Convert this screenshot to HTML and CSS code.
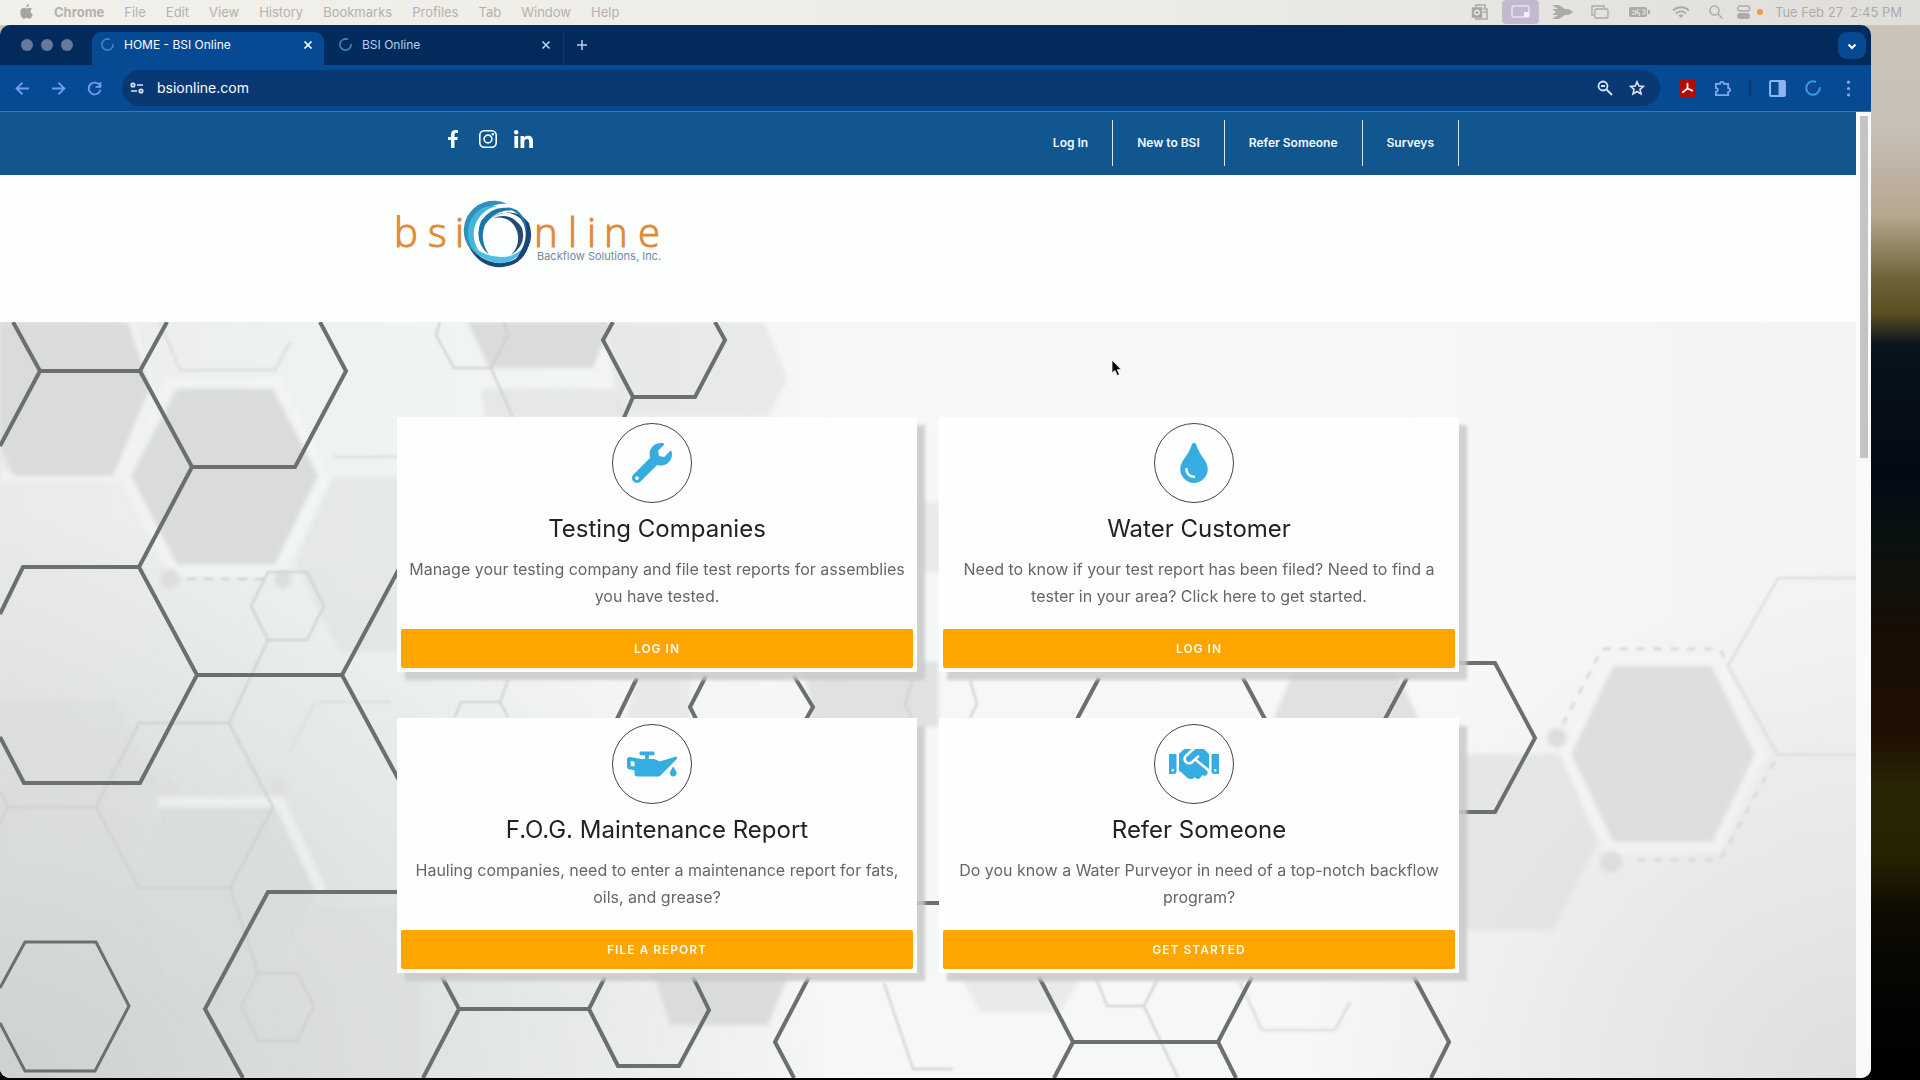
FILE: index.html
```html
<!DOCTYPE html>
<html lang="en">
<head>
<meta charset="utf-8">
<title>HOME - BSI Online</title>
<link rel="stylesheet" href="styles.css">
</head>
<body>
<svg class="defs" aria-hidden="true">
  <symbol id="ring" viewBox="0 0 16 16"><path d="M10 2.400A6 6 0 1 0 14 8" fill="none" stroke="currentColor" stroke-width="1.800" stroke-linecap="round"/></symbol>
  <symbol id="close" viewBox="0 0 10 10"><path d="M1.500 1.500l7 7M8.500 1.500l-7 7" stroke="currentColor" stroke-width="1.700"/></symbol>
</svg>

<header class="menubar">
  <nav class="menus" aria-label="Menu bar">
    <svg class="apple" viewBox="0 0 14 16"><path d="M9.800 0c.1 1.800-1.400 3.300-3 3.300C6.600 1.700 8.200.2 9.800 0zM12.900 5.400c-2.200 1.500-1.800 4.700.8 5.700-.8 2.200-2.100 4.700-3.700 4.700-1.100 0-1.500-.7-2.800-.7s-1.800.7-2.800.7C2.300 15.800.3 12 .3 8.700c0-3 1.900-4.700 3.800-4.700 1.200 0 2.200.8 3 .8s1.900-.9 3.400-.9c1 0 1.900.6 2.400 1.500z" fill="currentColor"/></svg>
    <b>Chrome</b><span>File</span><span>Edit</span><span>View</span><span>History</span><span>Bookmarks</span><span>Profiles</span><span>Tab</span><span>Window</span><span>Help</span>
  </nav>
  <div class="status">
    <svg class="outlook" viewBox="0 0 18 18"><g fill="none" stroke="currentColor" stroke-width="1.600"><path d="M5 5V2h9v3M5 14v2h11V6h-4M12 9h4"/><rect x="1.500" y="5" width="9" height="9" fill="#a3a29e"/></g><circle cx="6" cy="9.500" r="2.200" fill="none" stroke="#ecebe7" stroke-width="1.400"/></svg>
    <span class="recording"><svg viewBox="0 0 20 14"><rect x="1" y="1" width="17" height="11" rx="2" fill="none" stroke="#e6e1f0" stroke-width="1.600"/><path d="M13 12V7h5v5" fill="#f3f0f8"/></svg></span>
    <svg class="arrows" viewBox="0 0 22 14"><path d="M1 0h7l6 4h4l4 3-4 3h-4l-6 4H1l6-4H1l4-3-4-3h6z" fill="currentColor"/></svg>
    <svg class="stack" viewBox="0 0 18 14"><g fill="none" stroke="currentColor" stroke-width="1.400"><path d="M3 10H1V1h12v2"/><rect x="4" y="4" width="13" height="9" rx="1"/></g></svg>
    <svg class="battery" viewBox="0 0 21 10"><rect width="18" height="10" rx="2" fill="currentColor"/><path d="M19 3h2v4h-2z" fill="currentColor"/><path d="M3 4h4v3H3M9 2l-1 4h3l-1 3M13 3h3v4h-3" stroke="#ecebe7" fill="none"/></svg>
    <svg class="wifi" viewBox="0 0 18 14"><g fill="none" stroke="currentColor" stroke-width="1.800"><path d="M1 5.500a11.500 11.500 0 0 1 16 0M4 8.500a7 7 0 0 1 10 0"/></g><path d="M9 13L6.500 10.500a3.500 3.500 0 0 1 5 0z" fill="currentColor"/></svg>
    <svg class="search" viewBox="0 0 14 14"><g fill="none" stroke="currentColor" stroke-width="1.500"><circle cx="5.500" cy="5.500" r="4.500"/><path d="M9 9l4.500 4.500"/></g></svg>
    <svg class="control" viewBox="0 0 26 14"><rect x=".7" y="1" width="12" height="5" rx="2.500" fill="none" stroke="currentColor" stroke-width="1.400"/><rect y="8" width="13" height="6" rx="3" fill="currentColor"/><circle cx="23" cy="7" r="3" fill="#f59a3c"/></svg>
    <time>Tue Feb 27&nbsp; 2:45 PM</time>
  </div>
</header>

<main class="window">
  <div class="tabstrip">
    <div class="lights"><i></i><i></i><i></i></div>
    <div class="tab active"><svg class="ring"><use href="#ring"/></svg><span>HOME - BSI Online</span><button aria-label="Close tab"><svg><use href="#close"/></svg></button></div>
    <div class="tab"><svg class="ring"><use href="#ring"/></svg><span>BSI Online</span><button aria-label="Close tab"><svg><use href="#close"/></svg></button></div>
    <button class="newtab" aria-label="New tab"><svg viewBox="0 0 12 12"><path d="M6 1v10M1 6h10" stroke="currentColor" stroke-width="1.500"/></svg></button>
    <button class="tabsearch" aria-label="Search tabs"><svg viewBox="0 0 12 12"><path d="M2.500 4.500L6 8l3.500-3.500" fill="none" stroke="#fff" stroke-width="2"/></svg></button>
  </div>

  <div class="toolbar">
    <button aria-label="Back"><svg viewBox="0 0 14 14"><path d="M13 7H2M7 1.500L1.500 7 7 12.500"/></svg></button>
    <button aria-label="Forward"><svg viewBox="0 0 14 14"><path d="M1 7h11M7 1.500L12.500 7 7 12.500"/></svg></button>
    <button aria-label="Reload"><svg viewBox="0 0 14 14"><path d="M12 4.500A5.500 5.500 0 1 0 12.500 8M12.500 1v4.500H8"/></svg></button>
    <div class="omnibox">
      <svg class="tune" viewBox="0 0 14 12"><g fill="none" stroke="currentColor" stroke-width="1.700"><circle cx="3" cy="3" r="1.700"/><path d="M7 3h6M1 9h6"/><circle cx="11" cy="9" r="1.700"/></g></svg>
      <input type="text" aria-label="Address" value="bsionline.com">
      <svg class="mag" viewBox="0 0 16 16"><g fill="none" stroke="currentColor" stroke-width="1.800"><circle cx="6" cy="6" r="4.500"/><path d="M9.500 9.500L15 15M4 6h4"/></g></svg>
      <svg class="mag" viewBox="0 0 16 16"><path d="M8 1.800l1.900 4.200 4.500.4-3.400 3 1 4.500L8 11.500l-4 2.400 1-4.500-3.400-3 4.500-.4z" fill="none" stroke="currentColor" stroke-width="1.600"/></svg>
    </div>
    <div class="extensions">
      <svg viewBox="0 0 16 16"><rect width="16" height="16" rx="2" fill="#b30b00"/><path d="M8 3.500V8l-4.500 3.500M8 8l4.500 2" fill="none" stroke="#fff" stroke-width="1.700" stroke-linecap="round"/></svg>
      <svg viewBox="0 0 18 18"><path d="M2 4h4.500a2 2 0 0 1 4 0H15v4.500a2 2 0 0 1 0 4V16H2v-3.500a2 2 0 0 0 0-4z" fill="none" stroke="#7fa8ea" stroke-width="1.900"/></svg>
      <span class="rule"></span>
      <svg viewBox="0 0 16 16"><rect x="1" y="1" width="14" height="14" rx="1" fill="none" stroke="#8fb4f0" stroke-width="1.900"/><path d="M9 1h6v14H9z" fill="#8fb4f0"/></svg>
      <svg class="profile" viewBox="0 0 16 16"><use href="#ring"/></svg>
      <svg viewBox="0 0 16 16"><g fill="#7fa8ea"><circle cx="8" cy="2" r="1.500"/><circle cx="8" cy="8" r="1.500"/><circle cx="8" cy="14" r="1.500"/></g></svg>
    </div>
  </div>

  <div class="viewport">
    <div class="page">
      <div class="topbar">
        <div class="container">
          <div class="social">
            <a href="#" aria-label="Facebook"><svg viewBox="0 0 10 18"><path d="M3 18V10H0V7h3V4.500C3 1.500 4.800 0 7.400 0 8.600 0 9.600.1 10 .2v2.900H8.200C6.800 3.100 6.500 3.800 6.500 4.800V7h3.300l-.5 3H6.500v8z" fill="#fff"/></svg></a>
            <a href="#" aria-label="Instagram"><svg viewBox="0 0 18 18"><g fill="none" stroke="#fff" stroke-width="1.600"><rect x=".8" y=".8" width="16.400" height="16.400" rx="4.500"/><circle cx="9" cy="9" r="3.900"/></g><circle cx="13.800" cy="4.200" r="1.200" fill="#fff"/></svg></a>
            <a href="#" aria-label="LinkedIn"><svg viewBox="0 0 19 18"><circle cx="2.200" cy="2.200" r="2.200" fill="#fff"/><path d="M.4 6h3.700v12H.4zM6.500 6H10v1.700C10.600 6.600 11.900 5.700 13.700 5.700 17.500 5.700 19 7.700 19 11.300V18h-3.800v-6c0-1.600-.3-3-2.200-3s-2.700 1.400-2.700 3v6H6.500z" fill="#fff"/></svg></a>
          </div>
          <nav class="links" aria-label="Site">
            <a href="#">Log In</a><a href="#">New to BSI</a><a href="#">Refer Someone</a><a href="#">Surveys</a>
          </nav>
        </div>
      </div>

      <div class="brand">
        <div class="container">
          <a href="#" aria-label="bsi Online, Backflow Solutions, Inc.">
            <svg class="logo" viewBox="0 0 270 66">
              <text class="word" y="44" x="-3 31 58">bsi</text>
              <text class="word" y="44" x="137 171 190 207 241">nline</text>
              <text class="tag" x="140" y="57">Backflow Solutions, Inc.</text>
              <g>
                <path fill="#2f8fbd" d="M110 1A32 32 0 0 0 83 54A28 28 0 0 1 110 1z"/>
                <path fill="#45b4dc" d="M100 3A29 29 0 0 0 92 57A24 26 0 0 1 100 3z"/>
                <path fill="#1a76ab" d="M122 8Q98 -2 84 18Q76 38 92 52Q82 36 88 22Q100 4 122 8z"/>
                <path fill="#1d4774" d="M72 44Q84 66 106 64Q126 62 132 42Q122 59 104 60Q86 60 72 44z"/>
                <path fill="#4cc0e4" d="M76 43Q88 62 106 60Q120 58 127 44Q116 55 104 54Q88 54 76 43z"/>
                <path fill="#16457b" d="M94 15Q110 4 124 16Q136 34 118 57Q140 44 132 20Q118 2 94 15z"/>
                <path fill="#1e7fb4" d="M108 5Q128 10 129 30Q131 18 122 9Q114 3 108 5z"/>
                <path fill="#234c73" d="M96 15Q114 12 120 28Q124 42 114 52Q130 42 125 25Q114 8 96 15z"/>
              </g>
            </svg>
          </a>
        </div>
      </div>

      <section class="hero">
        <svg class="hexes" viewBox="0 0 1856 756" preserveAspectRatio="xMidYMin slice" aria-hidden="true">
          <defs>
            <filter id="soft" x="-5%" y="-5%" width="110%" height="110%"><feGaussianBlur stdDeviation="2"/></filter>
            <filter id="faint" x="-5%" y="-5%" width="110%" height="110%"><feGaussianBlur stdDeviation="1"/></filter>
          </defs>
          <g filter="url(#soft)">
            <g fill="none" stroke="#f4f6f5" stroke-width="11" opacity=".6">
              <path d="M128 -4L150 70 113 154H0M170 60H277L325 154 279 249H173L124 154zM158 480H280L322 570M1566 434L1610 338H1716L1762 432 1716 526H1610z"/>
            </g>
            <g class="tile">
              <path d="M0 0H128L150 66 113 154H13L0 124z"/>
              <path d="M177 67H273L318 154 275 242H177L131 154z"/>
              <path d="M165 486H275L315 570 272 660H170L130 575z" opacity=".7"/>
              <path d="M468 0H611L593 46H489z"/><path d="M482 67H614L626 96H485z" opacity=".5"/>
              <path d="M650 640H794L768 703H670z"/>
              <path d="M800 340H938V405H806L813 385z" opacity=".8"/>
              <path d="M1300 335H1390L1422 405H1270z" opacity=".8"/>
            </g>
            <path class="tile" opacity=".45" d="M333 155H420V330H340L295 240zM0 378H115L160 470 115 556H0zM310 585H420V756H300L270 680zM604 0H764L788 57 768 95H620zM640 345H690V400H625zM917 180H940V250H917zM952 640H1090L1060 690H980z"/>
            <path fill="#dedfdf" opacity=".7" d="M1450 432H1560L1598 520 1553 608H1450z"/>
            <path fill="#dedede" d="M1571 432L1613 344H1712L1755 432 1712 520H1613z"/>
            <g fill="#dcdedd"><circle cx="170" cy="257" r="10"/><circle cx="283" cy="257" r="9"/><circle cx="168" cy="466" r="9"/><circle cx="278" cy="466" r="9"/><circle cx="1557" cy="416" r="10"/><circle cx="1611" cy="540" r="11"/></g>
          </g>
          <g fill="none" stroke="#cdd0cf" stroke-width="2" filter="url(#faint)">
            <path d="M251 284L268 250H307L324 284 307 318H268zM268 318L229 401H139L96 485 139 566H230L273 485 229 401M96 485H8L0 470M8 485L0 502M230 566L258 650M241 684L258 651H297L314 684 297 719H258z"/>
            <path d="M440 0L436 13 454 46H491L508 13 504 0M491 46L513 96M455 395L461 380H500L508 395M500 380L508 358M884 661L913 747H953M1096 656L1107 684H1144L1158 656M1144 684L1178 756M912 358L905 382 912 396M970 358L977 382 970 396"/>
            <path stroke="#dfe1e0" stroke-width="3" d="M1856 256H1778L1728 344 1778 433H1856M1240 660L1262 708H1335L1350 680M160 0L180 48H275L290 20M333 135H410M317 380H390M290 430L315 380"/>
            <path stroke-dasharray="9 8" d="M187 257H268"/>
            <path stroke="#dadada" stroke-width="3" stroke-dasharray="8 9" d="M1563 402L1602 327H1720L1728 344M1774 440L1720 538H1628"/>
          </g>
          <g fill="none" stroke="#6c6f6f" stroke-width="4">
            <path d="M13 0L40 49H140L167 0M40 49L0 124M140 49L192 145H295L346 49 320 0M192 145L139 245M0 292L23 245H139L197 353 140 461H24L0 415M197 353H342L400 245M342 353L400 460M420 570H268L205 687 243 756"/>
            <path stroke-width="3" d="M0 666L25 620H96L129 684 95 749H25L0 701"/>
            <path d="M613 0L603 18 633 75H695L725 18 715 0M633 75L623 98"/>
            <path d="M637 356L616 399M706 354L690 385 697 399M794 354L813 385 805 399M1099 356L1076 399M1243 356L1266 399M1407 356L1384 399M1450 341H1495L1535 416 1495 490H1450M910 581H945"/>
            <path d="M442 655L459 687H589L605 655M459 687L423 756M589 687L618 744H679L709 688 693 655M809 655L775 720 794 756M1039 655L1073 720H1218L1252 655M1073 720L1054 756M1218 720L1236 756M1414 655L1449 720 1431 756"/>
          </g>
        </svg>
        <div class="cards">
          <article class="card">
            <div class="icon"><span><svg width="40" height="40" viewBox="0 0 512 512"><path d="M507.730 109.100c-2.240-9.030-13.540-12.090-20.120-5.510l-74.360 74.360-67.880-11.310-11.310-67.880 74.360-74.360c6.620-6.620 3.430-17.900-5.660-20.160-47.380-11.740-99.550.91-136.580 37.930-39.640 39.640-50.550 97.100-34.050 147.200L18.740 402.760c-24.990 24.990-24.990 65.510 0 90.500 24.990 24.990 65.510 24.990 90.500 0l213.210-213.210c50.120 16.710 107.470 5.680 147.370-34.220 37.070-37.070 49.700-89.320 37.910-136.730zM64 472c-13.250 0-24-10.750-24-24 0-13.260 10.750-24 24-24s24 10.740 24 24c0 13.250-10.750 24-24 24z"/></svg></span></div>
            <h2>Testing Companies</h2>
            <p>Manage your testing company and file test reports for assemblies you have tested.</p>
            <a class="cta" href="#">LOG IN</a>
          </article>
          <article class="card">
            <div class="icon"><span><svg width="28" height="40" viewBox="0 0 352 512"><path d="M205.220 22.090c-7.940-28.780-49.440-30.120-58.440 0C100.010 179.850 0 222.720 0 333.910 0 432.350 78.720 512 176 512s176-79.650 176-178.090c0-111.750-99.790-153.340-146.780-311.820zM176 448c-61.750 0-112-50.250-112-112 0-8.840 7.160-16 16-16s16 7.160 16 16c0 44.110 35.890 80 80 80 8.840 0 16 7.160 16 16s-7.160 16-16 16z"/></svg></span></div>
            <h2>Water Customer</h2>
            <p>Need to know if your test report has been filed? Need to find a tester in your area? Click here to get started.</p>
            <a class="cta" href="#">LOG IN</a>
          </article>
          <article class="card">
            <div class="icon"><span><svg width="50" height="40" viewBox="0 0 640 512"><path d="M629.800 160.310L416 224l-50.490-25.240a64.070 64.070 0 0 0-28.620-6.760H280v-48h56c8.840 0 16-7.160 16-16v-16c0-8.840-7.160-16-16-16H176c-8.840 0-16 7.160-16 16v16c0 8.840 7.160 16 16 16h56v48h-56L37.720 166.860a31.900 31.900 0 0 0-5.790-.53C14.670 166.330 0 180.360 0 198.340v94.950c0 15.460 11.060 28.720 26.280 31.480L96 337.460V384c0 17.670 14.330 32 32 32h274.630c8.550 0 16.750-3.420 22.760-9.510l212.260-214.750c1.500-1.500 2.340-3.540 2.340-5.660V168c.01-5.310-5.080-9.150-10.190-7.690zM96 288.670l-48-8.730v-62.430l48 8.730v62.430zm453.330 84.660c0 23.560 19.100 42.670 42.670 42.670s42.670-19.100 42.670-42.670S592 288 592 288s-42.670 61.770-42.670 85.330z"/></svg></span></div>
            <h2>F.O.G. Maintenance Report</h2>
            <p>Hauling companies, need to enter a maintenance report for fats, oils, and grease?</p>
            <a class="cta" href="#">FILE A REPORT</a>
          </article>
          <article class="card">
            <div class="icon"><span><svg width="50" height="40" viewBox="0 0 640 512"><path d="M434.700 64h-85.900c-8 0-15.700 3-21.600 8.400l-98.300 90c-.1.1-.2.3-.3.4-16.600 15.600-16.300 40.500-2.100 56 12.700 13.900 39.400 17.600 56.100 2.700.1-.1.3-.1.4-.2l79.900-73.200c6.500-5.900 16.700-5.500 22.600 1 6 6.500 5.500 16.600-1 22.600l-26.100 23.900L504 313.800c2.900 2.400 5.500 5 7.900 7.700V128l-54.600-54.600c-5.900-6-14.100-9.400-22.600-9.400zM544 128.200v223.900c0 17.700 14.300 32 32 32h64V128.200h-96zm48 223.900c-8.800 0-16-7.200-16-16s7.200-16 16-16 16 7.200 16 16-7.200 16-16 16zM0 384h64c17.700 0 32-14.300 32-32V128.200H0V384zm48-63.900c8.800 0 16 7.200 16 16s-7.200 16-16 16-16-7.200-16-16c0-8.900 7.200-16 16-16zm435.900 18.600L334.600 217.500l-30 27.500c-29.700 27.100-75.200 24.500-101.700-4.400-26.900-29.400-24.800-74.900 4.400-101.700L289.100 64h-83.800c-8.500 0-16.600 3.400-22.600 9.400L128 128v223.900h18.300l90.500 81.900c27.400 22.300 67.700 18.100 90-9.300l.2-.2 17.900 15.500c15.900 13 39.400 10.500 52.300-5.400l31.400-38.600 5.400 4.400c13.700 11.100 33.900 9.100 45-4.700l9.500-11.700c11.200-13.800 9.100-33.900-4.600-45.100z"/></svg></span></div>
            <h2>Refer Someone</h2>
            <p>Do you know a Water Purveyor in need of a top-notch backflow program?</p>
            <a class="cta" href="#">GET STARTED</a>
          </article>
        </div>
      </section>
    </div>
    <div class="scrollbar"><div class="thumb"></div></div>
  </div>
</main>

<svg class="cursor" viewBox="0 0 12 18" aria-hidden="true"><path d="M1 1v13l3-2.500 2.200 5 2.300-1-2.200-4.800h4z" fill="#000" stroke="#fff" stroke-width=".8"/></svg>
</body>
</html>
```

FILE: styles.css
```css
* { box-sizing: border-box; }

body {
  margin: 0;
  min-height: 100vh;
  display: flex;
  flex-direction: column;
  font-family: Inter, "Liberation Sans", sans-serif;
  background: linear-gradient(180deg, #cbc4bc 0, #c8c0b6 12%, #b5a68f 20%, #6d6136 26%, #5a4d22 29%, #08131c 32%, #030a16 44%, #0a120f 50%, #170d06 58%, #1f1003 68%, #2a2604 73%, #262303 79%, #100c02 84%, #040402 92%, #000 100%);
}

a { color: inherit; text-decoration: none; }
button { border: 0; padding: 0; background: none; color: inherit; font: inherit; display: flex; align-items: center; justify-content: center; }
svg { display: block; flex: none; }
.defs { position: absolute; width: 0; height: 0; }

/* macOS menu bar */
.menubar {
  height: 25px;
  display: flex;
  align-items: center;
  justify-content: space-between;
  padding: 0 18px 2px 20px;
  background: linear-gradient(90deg, #f1f0eb, #ecebe6 60%, #e0deda);
  color: #b3b2ae;
  font-size: 13px;
}
.menus { display: flex; align-items: center; gap: 20px; }
.apple { width: 13px; height: 15px; margin-right: 1px; color: #a5a4a0; }
.status { display: flex; align-items: center; color: #acaba7; }
.outlook { width: 18px; height: 18px; margin-right: 13px; }
.recording { width: 37px; height: 24px; border-radius: 4px; background: #c3bad2; display: flex; align-items: center; justify-content: center; margin-right: 12px; }
.recording svg { width: 20px; height: 14px; }
.arrows { width: 22px; height: 14px; margin-right: 18px; }
.stack { width: 18px; height: 14px; margin-right: 20px; }
.battery { width: 21px; height: 10px; margin-right: 22px; }
.wifi { width: 18px; height: 14px; margin-right: 19px; }
.search { width: 14px; height: 14px; margin-right: 14px; }
.control { width: 26px; height: 14px; margin-right: 12px; }

/* Browser window */
.window {
  flex: 1;
  margin: 0 49px 2px 0;
  display: flex;
  flex-direction: column;
  border-radius: 10px;
  overflow: hidden;
}
.tabstrip {
  height: 40px;
  display: flex;
  align-items: flex-end;
  padding: 0 5px 0 21px;
  background: #022a5b;
  color: #b9d0f5;
  font-size: 12px;
}
.lights { display: flex; gap: 8px; align-self: center; margin-right: 19px; }
.lights i { width: 12px; height: 12px; border-radius: 50%; background: #66799b; }
.tab { width: 240px; height: 33px; display: flex; align-items: center; padding: 0 11px 8px; gap: 9px; }
.tab.active { width: 232px; background: #064a94; color: #fff; border-radius: 9px 9px 0 0; padding: 0 11px 8px 8px; }
.tab:not(.active) { padding-left: 14px; padding-right: 12px; border-right: 1px solid #0b3a75; }
.tab .ring { width: 15px; height: 15px; color: #3f86c0; }
.tab span { flex: 1; }
.tab button svg { width: 10px; height: 10px; }
.newtab { height: 33px; padding: 0 0 8px 12px; }
.newtab svg { width: 12px; height: 12px; }
.tabsearch { width: 28px; height: 27px; margin: 0 0 6px auto; border-radius: 9px; background: #064a94; }
.tabsearch svg { width: 12px; height: 12px; }

.toolbar {
  height: 47px;
  display: flex;
  align-items: center;
  padding: 0 14px;
  background: #064a94;
  border-bottom: 1px solid #3d74b4;
}
.toolbar > button { width: 16px; margin-right: 20px; }
.toolbar > button svg { width: 15px; height: 15px; fill: none; stroke: #6ea0f0; stroke-width: 1.7; }
.omnibox {
  flex: 1;
  height: 36px;
  display: flex;
  align-items: center;
  padding: 0 15px 0 8px;
  border-radius: 18px;
  background: #0a3873;
  color: #dbe6fa;
}
.tune { width: 14px; height: 12px; }
.omnibox input { flex: 1; min-width: 0; border: 0; padding: 0; margin-left: 13px; background: none; color: #fff; font: 14px/20px Inter, sans-serif; outline: 0; }
.mag { width: 16px; height: 16px; margin-left: 16px; }
.extensions { display: flex; align-items: center; gap: 18px; margin-left: 19px; }
.extensions svg { width: 17px; height: 17px; }
.rule { width: 2px; height: 16px; background: #0a3873; }
.extensions .profile { width: 18px; height: 18px; color: #3a9bd8; }

/* Site */
.viewport { flex: 1; display: flex; background: #fff; }
.page { flex: 1; display: flex; flex-direction: column; }
.scrollbar { width: 15px; padding: 4px 3px 0 4px; background: #fafafa; }
.thumb { height: 342px; background: #c4c4c4; }
.container { width: 1062px; max-width: 100%; margin: 0 auto; display: flex; justify-content: space-between; }

.topbar { height: 63px; background: #11568f; }
.topbar .container { padding: 8px 0 0 47px; }
.social { display: flex; align-items: center; gap: 17px; height: 38px; }
.social a { width: 18px; display: flex; justify-content: center; }
.social svg { height: 18px; }
.links { display: flex; color: #f4faff; font-size: 12px; font-weight: 600; line-height: 46px; }
.links a { padding: 0 24px; border-right: 1px solid #d4e8f6; }

.brand { height: 147px; padding-top: 28px; background: #fdfefe; }
.logo { width: 270px; height: 66px; overflow: visible; }
.word { font: 300 40px "Open Sans", sans-serif; fill: #e08b33; stroke: #e08b33; }
.tag { font: 11px Inter, sans-serif; fill: #6f8aa9; }

.hero {
  flex: 1;
  position: relative;
  padding: 95px 0 104px;
  overflow: hidden;
  background:
    radial-gradient(ellipse 45% 75% at 0 100%, #cdd1d0, rgba(214, 218, 217, 0)),
    radial-gradient(ellipse 30% 65% at 100% 100%, #dedede, rgba(230, 230, 230, 0)),
    linear-gradient(90deg, #e8ebea, #eff3f2 20%, #f6f7f7 45%, #f7f7f7 75%, #f3f3f3);
}
.hexes { position: absolute; inset: 0; width: 100%; height: 100%; }
.tile { fill: #d9dcdb; }

.cards {
  position: relative;
  width: 1062px;
  max-width: 100%;
  margin: 0 auto;
  display: grid;
  grid-template-columns: 1fr 1fr;
  gap: 46px 22px;
}
.card {
  padding: 6px 4px 4px;
  background: #fefefe;
  box-shadow: 8px 8px 3px rgba(200, 202, 201, .85);
  text-align: center;
}
.icon { display: flex; justify-content: center; padding-right: 10px; }
.icon span { width: 80px; height: 80px; border: 1px solid #444; border-radius: 50%; display: flex; align-items: center; justify-content: center; }
.icon svg { fill: #35ade0; }
.card h2 { margin: 11px 0 12px; font-size: 24px; line-height: 30px; font-weight: 400; color: #222; }
.card p { margin: 0; padding: 0 8px; font-size: 16px; line-height: 27px; color: #666; }
.cta {
  display: block;
  margin-top: 19px;
  border-radius: 2px;
  background: #ffa500;
  color: #fffaf0;
  font-size: 12px;
  font-weight: 600;
  line-height: 39px;
  letter-spacing: 1px;
}

.cursor { position: absolute; left: 1111px; top: 359px; width: 12px; height: 18px; }
```
